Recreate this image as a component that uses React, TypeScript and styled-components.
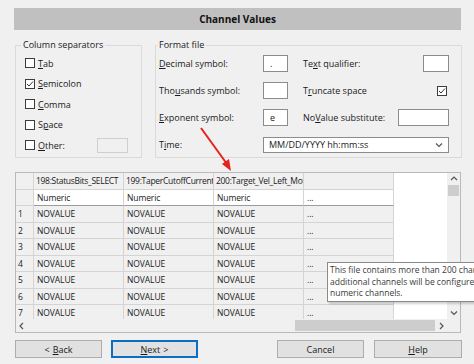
import React from "react";
import styled, { createGlobalStyle } from "styled-components";

const GlobalStyle = createGlobalStyle`
  html, body {
    margin: 0;
    padding: 0;
    background: #f0f0f0;
  }
  body {
    font-family: "Open Sans", "Noto Sans", sans-serif;
    font-size: 9px;
    color: #1a1a1a;
  }
`;

const Window = styled.div`
  position: relative;
  width: 474px;
  height: 364px;
  box-sizing: border-box;
  padding: 8px 12px 0 15px;
  background: #f0f0f0;
  overflow: hidden;
  display: flex;
  flex-direction: column;
`;

const TitleBar = styled.div`
  height: 22px;
  margin: 0 1px 0 -1px;
  background: #c0c0c0;
  display: flex;
  align-items: center;
  justify-content: center;
  font-weight: 700;
  font-size: 10px;
  color: #111;
`;

const Groups = styled.div`
  display: flex;
  gap: 13px;
  margin-top: 9px;
  height: 119px;
`;

const Group = styled.fieldset<{ w: number; pl: number; pr: number }>`
  margin: 0;
  min-width: 0;
  width: ${p => p.w}px;
  box-sizing: border-box;
  border: 1px solid #dadada;
  padding: 0 ${p => p.pr}px 0 ${p => p.pl}px;
`;

const Legend = styled.legend<{ ml: number }>`
  padding: 0 2px;
  margin-left: ${p => p.ml}px;
  line-height: 12px;
  color: #1a1a1a;
`;

const Key = styled.span`
  text-decoration: underline;
`;

const CheckRow = styled.div`
  height: 20.5px;
  display: flex;
  align-items: center;
  gap: 3px;
  &:first-of-type {
    margin-top: 2px;
  }
`;

const Box = styled.span`
  width: 10px;
  height: 10px;
  box-sizing: border-box;
  border: 1px solid #3c3c3c;
  background: #fff;
  display: inline-flex;
  align-items: center;
  justify-content: center;
  flex: none;
`;

const OtherInput = styled.div`
  margin-left: auto;
  width: 31px;
  height: 15px;
  box-sizing: border-box;
  border: 1px solid #cfcfcf;
  background: #f0f0f0;
`;

const FormatGrid = styled.div`
  display: grid;
  grid-template-columns: 104px 25px 15px 1fr auto;
  grid-auto-rows: 27px;
  align-items: center;
  margin-top: -1px;
`;

const TextBox = styled.div<{ w: number }>`
  width: ${p => p.w}px;
  height: 17px;
  box-sizing: border-box;
  border: 1px solid #8c8c8c;
  background: #fff;
  padding-left: 6px;
  display: flex;
  align-items: center;
`;

const SelectBox = styled.div`
  grid-column: 2 / -1;
  height: 16px;
  box-sizing: border-box;
  border: 1px solid #8c8c8c;
  background: #fff;
  padding: 0 5px 0 5px;
  display: flex;
  align-items: center;
  justify-content: space-between;
`;

const Label2 = styled.span`
  grid-column: 4;
`;

const RightCell = styled.div<{ pr?: number }>`
  grid-column: 5;
  justify-self: end;
  margin-right: ${p => p.pr || 0}px;
  display: flex;
`;

const TableFrame = styled.div`
  margin-top: 14px;
  margin-right: 1px;
  height: 161px;
  box-sizing: border-box;
  border: 1px solid #b9b9b9;
  display: grid;
  grid-template-columns: 1fr 13px;
  grid-template-rows: 1fr 13px;
  background: #fff;
`;

const Viewport = styled.div`
  overflow: hidden;
  background: #fff;
`;

const DataGrid = styled.div`
  display: grid;
  grid-template-columns: 18px repeat(4, 90px);
  grid-auto-rows: 16.5px;
  width: max-content;
  font-size: 8.5px;
`;

const Cell = styled.div<{ kind: "head" | "type" | "data" }>`
  box-sizing: border-box;
  border-right: 1px solid #d4d4d4;
  border-bottom: 1px solid ${p => (p.kind === "type" ? "#9c9c9c" : "#d4d4d4")};
  background: ${p => (p.kind === "type" ? "#fff" : "#f0f0f0")};
  padding: 0 ${p => (p.kind === "head" ? 2 : 3)}px;
  letter-spacing: ${p => (p.kind === "head" ? "-0.3px" : "-0.1px")};
  display: flex;
  align-items: center;
  white-space: nowrap;
  overflow: hidden;
  color: #1a1a1a;
`;

const VScroll = styled.div`
  background: #f0f0f0;
  display: flex;
  flex-direction: column;
  align-items: center;
`;

const HScroll = styled.div`
  background: #f0f0f0;
  display: flex;
  align-items: center;
`;

const Arrow = styled.div`
  width: 12px;
  height: 12px;
  flex: none;
  display: flex;
  align-items: center;
  justify-content: center;
`;

const VTrack = styled.div`
  flex: 1;
  width: 100%;
  display: flex;
  justify-content: center;
`;

const VThumb = styled.div`
  width: 11px;
  height: 11px;
  background: #cdcdcd;
`;

const HTrack = styled.div`
  flex: 1;
  height: 100%;
  display: flex;
  justify-content: flex-end;
  align-items: center;
`;

const HThumb = styled.div`
  width: 140px;
  height: 11px;
  background: #cdcdcd;
`;

const Corner = styled.div`
  background: #f0f0f0;
`;

const Footer = styled.div`
  margin-top: 7px;
  display: flex;
  justify-content: space-between;
`;

const ButtonGroup = styled.div<{ gap: number }>`
  display: flex;
  gap: ${p => p.gap}px;
`;

const Button = styled.div<{ primary?: boolean; w?: number }>`
  width: ${p => p.w || 87}px;
  height: 18px;
  box-sizing: border-box;
  background: #e1e1e1;
  border: ${p => (p.primary ? "2px solid #0a6fc4" : "1px solid #adadad")};
  display: flex;
  align-items: center;
  justify-content: center;
  gap: 3px;
  color: #1a1a1a;
`;

const Tooltip = styled.div`
  position: absolute;
  left: 327px;
  top: 262px;
  background: #fff;
  border: 1px solid #8a8a8a;
  padding: 1px 4px 2px 2px;
  font-size: 8.5px;
  line-height: 11.5px;
  white-space: nowrap;
  box-shadow: 2px 2px 2px rgba(0, 0, 0, 0.18);
  color: #3a3a3a;
`;

const Overlay = styled.svg`
  position: absolute;
  left: 0;
  top: 0;
  pointer-events: none;
`;

const Check = () => (
  <svg width="8" height="8" viewBox="0 0 8 8">
    <path d="M1 4 L3 6 L7 1.5" fill="none" stroke="#333" strokeWidth="1" />
  </svg>
);

const Chevron = ({ dir }: { dir: "up" | "down" | "left" | "right" }) => {
  const d = {
    up: "M1 5 L4 2 L7 5",
    down: "M1 2.5 L4 5.5 L7 2.5",
    left: "M5 1 L2 4 L5 7",
    right: "M3 1 L6 4 L3 7",
  }[dir];
  return (
    <svg width="8" height="8" viewBox="0 0 8 8">
      <path d={d} fill="none" stroke="#555" strokeWidth="1.2" />
    </svg>
  );
};

const columns = ["198:StatusBits_SELECT", "199:TaperCutoffCurrent", "200:Target_Vel_Left_Motor", ""];
const rows = [1, 2, 3, 4, 5, 6, 7];

const App = () => {
  return (
    <Window>
      <GlobalStyle />
      <TitleBar>Channel Values</TitleBar>
      <Groups>
        <Group w={127} pl={9} pr={13}>
          <Legend ml={-4}>Column separators</Legend>
          <CheckRow>
            <Box />
            <span><Key>T</Key>ab</span>
          </CheckRow>
          <CheckRow>
            <Box><Check /></Box>
            <span><Key>S</Key>emicolon</span>
          </CheckRow>
          <CheckRow>
            <Box />
            <span><Key>C</Key>omma</span>
          </CheckRow>
          <CheckRow>
            <Box />
            <span>S<Key>p</Key>ace</span>
          </CheckRow>
          <CheckRow>
            <Box />
            <span><Key>O</Key>ther:</span>
            <OtherInput />
          </CheckRow>
        </Group>
        <Group w={307} pl={3} pr={12}>
          <Legend ml={-2}>Format file</Legend>
          <FormatGrid>
            <span><Key>D</Key>ecimal symbol:</span>
            <TextBox w={25}>.</TextBox>
            <Label2>Te<Key>x</Key>t qualifier:</Label2>
            <RightCell><TextBox w={26} /></RightCell>

            <span>Tho<Key>u</Key>sands symbol:</span>
            <TextBox w={25} />
            <Label2>T<Key>r</Key>uncate space</Label2>
            <RightCell pr={2}><Box><Check /></Box></RightCell>

            <span><Key>E</Key>xponent symbol:</span>
            <TextBox w={25}>e</TextBox>
            <Label2>No<Key>V</Key>alue substitute:</Label2>
            <RightCell><TextBox w={51} /></RightCell>

            <span>T<Key>i</Key>me:</span>
            <SelectBox>
              <span>MM/DD/YYYY hh:mm:ss</span>
              <Chevron dir="down" />
            </SelectBox>
          </FormatGrid>
        </Group>
      </Groups>

      <TableFrame>
        <Viewport>
          <DataGrid>
            <Cell kind="head" />
            {columns.map((c, i) => (
              <Cell kind="head" key={"h" + i}>{c}</Cell>
            ))}
            <Cell kind="head" />
            {columns.map((c, i) => (
              <Cell kind="type" key={"t" + i}>{c ? "Numeric" : "..."}</Cell>
            ))}
            {rows.map(r => (
              <React.Fragment key={r}>
                <Cell kind="head">{r}</Cell>
                {columns.map((c, i) => (
                  <Cell kind="data" key={i}>{c ? "NOVALUE" : "..."}</Cell>
                ))}
              </React.Fragment>
            ))}
          </DataGrid>
        </Viewport>
        <VScroll>
          <Arrow><Chevron dir="up" /></Arrow>
          <VTrack><VThumb /></VTrack>
          <Arrow><Chevron dir="down" /></Arrow>
        </VScroll>
        <HScroll>
          <Arrow><Chevron dir="left" /></Arrow>
          <HTrack><HThumb /></HTrack>
          <Arrow><Chevron dir="right" /></Arrow>
        </HScroll>
        <Corner />
      </TableFrame>

      <Footer>
        <ButtonGroup gap={9}>
          <Button><span>&lt;</span><span><Key>B</Key>ack</span></Button>
          <Button primary><span><Key>N</Key>ext</span><span>&gt;</span></Button>
        </ButtonGroup>
        <ButtonGroup gap={10}>
          <Button><span>Cancel</span></Button>
          <Button w={88}><span><Key>H</Key>elp</span></Button>
        </ButtonGroup>
      </Footer>

      <Tooltip>
        This file contains more than 200 channels. The
        <br />
        additional channels will be configured as
        <br />
        numeric channels.
      </Tooltip>

      <Overlay width="474" height="364" viewBox="0 0 474 364">
        <line x1="201" y1="128" x2="227" y2="164" stroke="#e3231c" strokeWidth="2" />
        <polygon points="231,171 222,164 229,159" fill="#e3231c" />
      </Overlay>
    </Window>
  );
};

export default App;
